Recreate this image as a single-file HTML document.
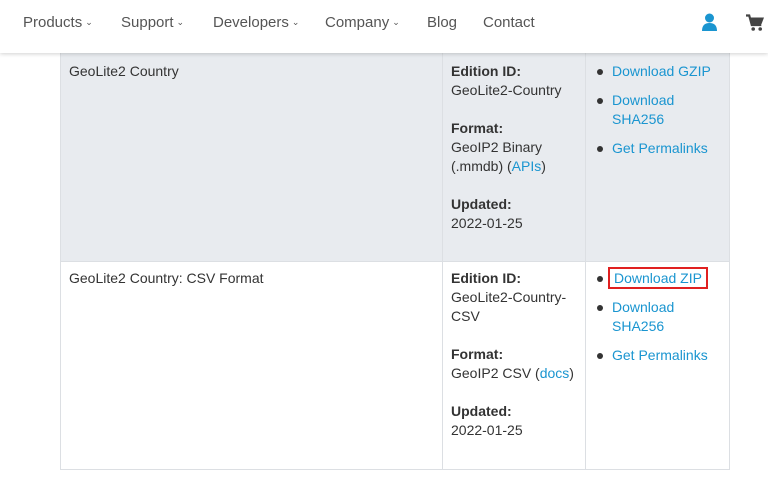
<!DOCTYPE html>
<html><head><style>
*{margin:0;padding:0;box-sizing:border-box}
body{width:768px;height:485px;overflow:hidden;background:#fff;font-family:"Liberation Sans",sans-serif;font-size:14px;color:#333;position:relative}
.hdr{position:absolute;left:0;top:0;width:768px;height:53px;background:#fff;box-shadow:0 1px 4px rgba(0,0,0,.18);z-index:2}
.hdr span{position:absolute;top:14px;font-size:15px;color:#555}
.hdr small{font-size:9px;margin-left:3px;vertical-align:2px}
.tbl{position:absolute;left:60px;top:40px;width:670px;border:1px solid #dcdfe3}
.row{display:flex;border-bottom:1px solid #dcdfe3}
.c{padding:9px 8px;line-height:19px}
.c1{width:382px;border-right:1px solid #dcdfe3}
.c2{width:143px;border-right:1px solid #dcdfe3}
.c3{width:143px;padding-left:8px}
b{font-weight:bold;color:#333}
a{color:#1a95d0;text-decoration:none}
ul{list-style:none}
li{position:relative;padding-left:18px;margin-bottom:10px}
li:before{content:"";position:absolute;left:3px;top:7px;width:6px;height:6px;border-radius:50%;background:#333}
</style></head><body>
<div class="hdr">
<span style="left:23px">Products<small>⌄</small></span>
<span style="left:121px">Support<small>⌄</small></span>
<span style="left:213px">Developers<small>⌄</small></span>
<span style="left:325px">Company<small>⌄</small></span>
<span style="left:427px">Blog</span>
<span style="left:483px">Contact</span>
<svg style="position:absolute;left:701px;top:13px" width="17" height="18" viewBox="0 0 17 18"><circle cx="8.5" cy="5" r="4.5" fill="#1a95d0"/><path d="M1 18 Q1 10 8.5 10 Q16 10 16 18Z" fill="#1a95d0"/></svg>
<svg style="position:absolute;left:746px;top:14px" width="18" height="18" viewBox="0 0 18 18"><path d="M0 1.5h3.2l2.6 9.5h9.5" fill="none" stroke="#444" stroke-width="2.2"/><path d="M4.2 3.5H18l-2.5 6.5H6z" fill="#444"/><circle cx="7.2" cy="15" r="1.8" fill="#444"/><circle cx="14.2" cy="15" r="1.8" fill="#444"/></svg>
</div>
<div class="tbl">
<div class="row" style="background:#e8ebef;height:221px;padding-top:12px">
<div class="c c1">GeoLite2 Country</div>
<div class="c c2"><b>Edition ID:</b><br>GeoLite2-Country<br><br><b>Format:</b><br>GeoIP2 Binary (.mmdb) (<a>APIs</a>)<br><br><b>Updated:</b><br>2022-01-25</div>
<div class="c c3"><ul><li><a>Download GZIP</a></li><li><a>Download SHA256</a></li><li><a>Get Permalinks</a></li></ul></div>
</div>
<div class="row" style="height:207px;border-bottom:none">
<div class="c c1" style="padding-top:7px">GeoLite2 Country: CSV Format</div>
<div class="c c2" style="padding-top:7px"><b>Edition ID:</b><br>GeoLite2-Country-CSV<br><br><b>Format:</b><br>GeoIP2 CSV (<a>docs</a>)<br><br><b>Updated:</b><br>2022-01-25</div>
<div class="c c3" style="padding-top:7px"><ul><li><a style="outline:2px solid #e02020;outline-offset:1px;padding:0 3px;margin-left:-1px">Download ZIP</a></li><li><a>Download SHA256</a></li><li><a>Get Permalinks</a></li></ul></div>
</div>
</div>
</body></html>
